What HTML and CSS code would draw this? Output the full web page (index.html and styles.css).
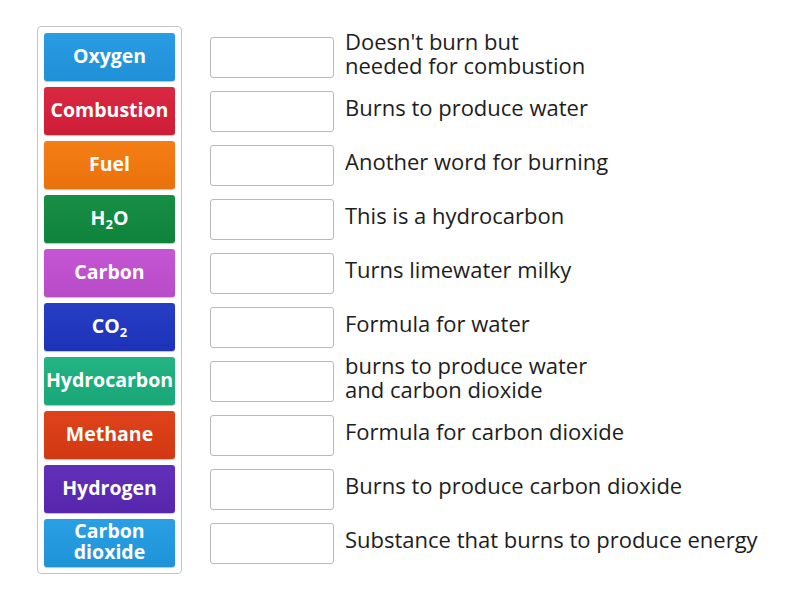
FILE: index.html
```html
<!DOCTYPE html>
<html>
<head>
<meta charset="utf-8">
<link rel="stylesheet" href="styles.css">
</head>
<body>
<div class="game">
  <div class="panel">
    <div class="tile c-oxygen"><span>Oxygen</span></div>
    <div class="tile c-combustion"><span>Combustion</span></div>
    <div class="tile c-fuel"><span>Fuel</span></div>
    <div class="tile c-water"><span>H<sub>2</sub>O</span></div>
    <div class="tile c-carbon"><span>Carbon</span></div>
    <div class="tile c-co2"><span>CO<sub>2</sub></span></div>
    <div class="tile c-hydrocarbon"><span>Hydrocarbon</span></div>
    <div class="tile c-methane"><span>Methane</span></div>
    <div class="tile c-hydrogen"><span>Hydrogen</span></div>
    <div class="tile c-dioxide"><span>Carbon<br>dioxide</span></div>
  </div>
  <div class="targets">
    <div class="row"><div class="box"></div><div class="desc">Doesn't burn but<br>needed for combustion</div></div>
    <div class="row"><div class="box"></div><div class="desc">Burns to produce water</div></div>
    <div class="row"><div class="box"></div><div class="desc">Another word for burning</div></div>
    <div class="row"><div class="box"></div><div class="desc">This is a hydrocarbon</div></div>
    <div class="row"><div class="box"></div><div class="desc">Turns limewater milky</div></div>
    <div class="row"><div class="box"></div><div class="desc">Formula for water</div></div>
    <div class="row"><div class="box"></div><div class="desc">burns to produce water<br>and carbon dioxide</div></div>
    <div class="row"><div class="box"></div><div class="desc">Formula for carbon dioxide</div></div>
    <div class="row"><div class="box"></div><div class="desc">Burns to produce carbon dioxide</div></div>
    <div class="row"><div class="box"></div><div class="desc">Substance that burns to produce energy</div></div>
  </div>
</div>
</body>
</html>
```
FILE: styles.css
```css
html, body {
  margin: 0;
  padding: 0;
  background: #ffffff;
}
body {
  font-family: "Open Sans", "Liberation Sans", sans-serif;
}
.game {
  display: flex;
  align-items: flex-start;
  padding: 26px 0 0 37px;
}
.panel {
  display: flex;
  flex-direction: column;
  gap: 6px;
  padding: 6px;
  border: 1px solid #c4c4c4;
  border-radius: 4px;
  background: #fff;
}
.tile {
  width: 131px;
  height: 48px;
  border-radius: 3px;
  color: #fff;
  font-weight: 700;
  font-size: 19.5px;
  line-height: 21px;
  display: flex;
  align-items: center;
  justify-content: center;
  text-align: center;
  box-shadow: 0 1px 1px rgba(0,0,0,0.25);
  background-image: linear-gradient(rgba(255,255,255,0.04), rgba(0,0,0,0.05));
}
.tile span {
  display: block;
  margin-bottom: 4px;
}
.tile sub {
  font-size: 13px;
  line-height: 0;
  vertical-align: -4px;
}
.c-oxygen { background-color: #2198e2; }
.c-combustion { background-color: #d81f3a; }
.c-fuel { background-color: #f5780c; }
.c-water { background-color: #0f8a3e; }
.c-carbon { background-color: #c24fd2; }
.c-co2 { background-color: #1e35c2; }
.c-hydrocarbon { background-color: #1bb07e; }
.c-methane { background-color: #dd3b12; }
.c-hydrogen { background-color: #5b28b6; }
.c-dioxide { background-color: #219be3; }
.targets {
  display: flex;
  flex-direction: column;
  gap: 6px;
  padding-top: 7px;
  margin-left: 28px;
}
.row {
  height: 48px;
  display: flex;
  align-items: center;
}
.box {
  width: 122px;
  height: 39px;
  border: 1px solid #b9b9b9;
  border-radius: 3px;
  background: #fff;
  flex: none;
}
.desc {
  margin-left: 11px;
  margin-bottom: 9px;
  font-size: 22px;
  line-height: 24px;
  color: #1d1d1d;
  white-space: nowrap;
}
```
